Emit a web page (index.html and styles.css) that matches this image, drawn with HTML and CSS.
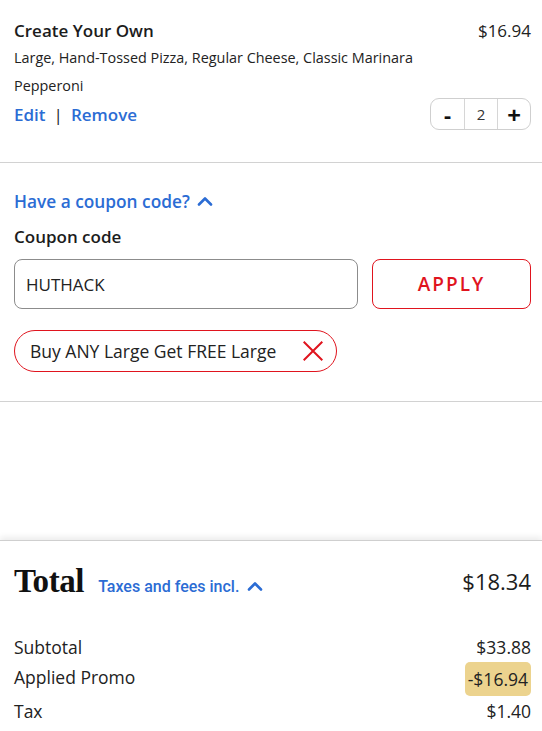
FILE: index.html
```html
<!DOCTYPE html>
<html lang="en">
<head>
<meta charset="utf-8">
<title>Cart</title>
<link rel="stylesheet" href="styles.css">
</head>
<body>
<div class="page">
  <section class="item">
    <div class="item-head">
      <span class="item-title">Create Your Own</span>
      <span class="item-price">$16.94</span>
    </div>
    <p class="item-desc">Large, Hand-Tossed Pizza, Regular Cheese, Classic Marinara<br>Pepperoni</p>
    <div class="item-actions">
      <div class="links">
        <a class="link">Edit</a>
        <span class="sep">|</span>
        <a class="link">Remove</a>
      </div>
      <div class="stepper">
        <span class="step minus">-</span>
        <span class="step qty">2</span>
        <span class="step plus">+</span>
      </div>
    </div>
  </section>

  <section class="coupon">
    <div class="coupon-toggle">Have a coupon code?
      <svg class="chev" width="16" height="10" viewBox="0 0 16 10"><path d="M2 8.5 L8 2.5 L14 8.5" fill="none" stroke="#2b6cd4" stroke-width="2.6" stroke-linecap="round" stroke-linejoin="round"/></svg>
    </div>
    <div class="coupon-label">Coupon code</div>
    <div class="coupon-row">
      <div class="coupon-input">HUTHACK</div>
      <div class="apply">APPLY</div>
    </div>
    <div class="chip">
      <span>Buy ANY Large Get FREE Large</span>
      <svg class="chip-x" width="20" height="20" viewBox="0 0 20 20"><path d="M0.7 0.7 L19.3 19.3 M19.3 0.7 L0.7 19.3" stroke="#e0141e" stroke-width="2" fill="none"/></svg>
    </div>
  </section>

  <div class="spacer"></div>

  <section class="totals">
    <div class="total-row">
      <div class="total-left">
        <span class="total-word">Total</span>
        <span class="taxes">Taxes and fees incl.
          <svg class="chev2" width="16" height="10" viewBox="0 0 16 10"><path d="M2 8.5 L8 2.5 L14 8.5" fill="none" stroke="#2b6cd4" stroke-width="2.6" stroke-linecap="round" stroke-linejoin="round"/></svg>
        </span>
      </div>
      <span class="total-amt">$18.34</span>
    </div>
    <div class="lines">
      <div class="line"><span>Subtotal</span><span>$33.88</span></div>
      <div class="line promo"><span>Applied Promo</span><span class="promo-amt">-$16.94</span></div>
      <div class="line"><span>Tax</span><span>$1.40</span></div>
    </div>
  </section>
</div>
</body>
</html>
```

FILE: styles.css
```css
* { box-sizing: border-box; }
html, body { margin: 0; padding: 0; background: #fff; }
body {
  font-family: "Open Sans", "Liberation Sans", sans-serif;
  color: #1c1c1c;
  height: 731px;
  overflow: hidden;
}
.page {
  display: flex;
  flex-direction: column;
  height: 731px;
}
.item {
  padding: 18px 11px 32px 14px;
  border-bottom: 1px solid #d2d2d2;
}
.item-head {
  display: flex;
  justify-content: space-between;
  align-items: center;
  height: 24px;
}
.item-title { font-size: 17px; font-weight: 600; }
.item-price { font-size: 17px; color: #222; }
.item-desc {
  margin: 2px 0 0;
  font-size: 14.4px;
  line-height: 28px;
  color: #222;
}
.item-actions {
  display: flex;
  justify-content: space-between;
  align-items: center;
  margin-top: -2px;
}
.links { display: flex; align-items: center; gap: 8px; font-size: 17px; font-weight: 600; }
.link { color: #2b6cd4; }
.sep { font-weight: 400; color: #222; }
.stepper {
  display: flex;
  border: 1px solid #cfcfcf;
  border-radius: 9px;
  height: 32px;
}
.step {
  display: flex;
  align-items: center;
  justify-content: center;
  font-size: 15px;
  color: #333;
}
.minus { width: 34px; font-size: 22px; font-weight: 700; color: #111; border-right: 1px solid #d6d6d6; }
.qty { width: 32px; }
.plus { width: 33px; font-size: 24px; font-weight: 700; color: #111; border-left: 1px solid #d6d6d6; }

.coupon {
  padding: 26px 11px 29px 14px;
  border-bottom: 1px solid #d2d2d2;
}
.coupon-toggle {
  display: flex;
  align-items: center;
  gap: 7px;
  font-size: 17.3px;
  font-weight: 600;
  color: #2b6cd4;
  height: 24px;
}
.chev { margin-top: -1px; }
.coupon-label {
  margin-top: 12px;
  font-size: 17px;
  font-weight: 600;
  height: 24px;
  line-height: 24px;
}
.coupon-row {
  display: flex;
  gap: 14px;
  margin-top: 10px;
}
.coupon-input {
  flex: 0 0 344px;
  height: 50px;
  border: 1px solid #8c8c8c;
  border-radius: 8px;
  display: flex;
  align-items: center;
  padding-left: 11px;
  font-size: 17px;
  color: #222;
}
.apply {
  flex: 1;
  height: 50px;
  border: 1px solid #e0141e;
  border-radius: 8px;
  display: flex;
  align-items: center;
  justify-content: center;
  color: #e0141e;
  font-size: 19px;
  font-weight: 600;
  letter-spacing: 2px;
}
.chip {
  margin-top: 21px;
  display: inline-flex;
  align-items: center;
  gap: 27px;
  height: 42px;
  padding: 0 13px 0 15px;
  border: 1px solid #e0141e;
  border-radius: 21px;
  font-size: 17.5px;
  color: #222;
  align-self: flex-start;
}
.spacer { flex: 1; }

.totals {
  height: 191px;
  padding: 20px 11px 0 14px;
  border-top: 1px solid #cfcfcf;
  box-shadow: 0 -3px 6px rgba(0,0,0,0.08);
}
.total-row {
  display: flex;
  justify-content: space-between;
  align-items: center;
  height: 40px;
}
.total-left { display: flex; align-items: baseline; gap: 14px; }
.total-word {
  font-family: "Liberation Serif", "DejaVu Serif", serif;
  font-weight: 700;
  font-size: 33px;
  letter-spacing: -0.4px;
  color: #111;
}
.taxes {
  font-family: Roboto, "Liberation Sans", sans-serif;
  font-size: 16px;
  font-weight: 500;
  color: #2b6cd4;
  display: inline-flex;
  align-items: center;
  gap: 8px;
}
.total-amt { font-size: 22px; color: #1c1c1c; }
.lines { margin-top: 31px; }
.line {
  display: flex;
  justify-content: space-between;
  align-items: center;
  height: 30px;
  font-size: 17.5px;
  color: #222;
}
.line.promo { height: 34px; }
.line.promo > span:first-child { margin-top: -4px; }
.promo-amt {
  background: #ecd38e;
  border-radius: 5px;
  padding: 0 3px;
  height: 34px;
  display: flex;
  align-items: center;
}
```
